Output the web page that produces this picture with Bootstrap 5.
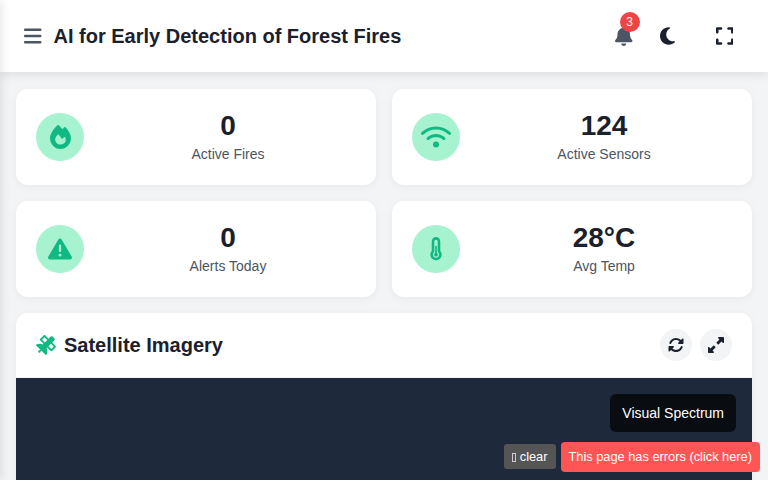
<!DOCTYPE html>
<html lang="en">
<head>
    <meta charset="UTF-8">
    <meta name="viewport" content="width=device-width, initial-scale=1.0">
    <title>AI for Early Detection of Forest Fires</title>
    <link href="https://cdn.jsdelivr.net/npm/bootstrap@5.3.0/dist/css/bootstrap.min.css" rel="stylesheet">
    <style>
        html, body { height: 100%; overflow: hidden; }
        body {
            background-color: #f3f4f6;
            color: #1a202c;
            font-family: "Liberation Sans", Arial, sans-serif;
            line-height: 1.6;
        }
        .side-shadow {
            position: fixed;
            top: 0;
            bottom: 0;
            left: -10px;
            width: 10px;
            box-shadow: 2px 0 10px rgba(0,0,0,0.1);
            z-index: 20;
        }
        .top-bar {
            height: 72px;
            padding: 0 35px 0 24px;
            background: #fff;
            box-shadow: 0 2px 10px rgba(0,0,0,0.1);
        }
        .menu-btn { height: 20px; display: block; color: #4b5563; margin-right: 12px; }
        .page-title { font-size: 20px; font-weight: 700; line-height: 1.2; margin: 0; }
        .top-action { position: relative; display: flex; color: #1a202c; }
        .top-action svg { height: 20px; display: block; }
        .bell-action { color: #4b5563; margin-right: 27px; }
        .moon-action { margin-right: 41px; }
        .count-dot {
            position: absolute;
            top: -14px;
            right: -7px;
            width: 20px;
            height: 20px;
            border-radius: 50%;
            background: #ef4444;
            color: #fff;
            font-size: 12px;
            line-height: 20px;
            text-align: center;
        }
        .page-body { padding: 17px 16px 0; }
        .stat-card {
            border: 0;
            border-radius: 12px;
            padding: 20px;
            box-shadow: 0 2px 8px rgba(0,0,0,0.05);
        }
        .stat-icon {
            width: 48px;
            height: 48px;
            flex-shrink: 0;
            border-radius: 50%;
            background: #a7f3d0;
            color: #10b981;
            margin-right: 16px;
        }
        .stat-icon svg { height: 24px; display: block; }
        .stat-num { font-size: 28px; font-weight: 700; line-height: 1.2; }
        .stat-label { font-size: 14px; color: #4b5563; }
        .imagery-panel {
            border: 0;
            border-radius: 12px;
            margin-top: 16px;
            overflow: hidden;
            box-shadow: 0 2px 8px rgba(0,0,0,0.05);
        }
        .imagery-head { padding: 16px 20px; border-bottom: 1px solid #f3f4f6; }
        .imagery-title { font-size: 20px; font-weight: 700; line-height: 1.6; margin: 0; }
        .imagery-title svg { width: 20px; height: 20px; color: #10b981; margin-right: 8px; }
        .round-btn {
            width: 32px;
            height: 32px;
            padding: 0;
            border: 0;
            border-radius: 50%;
            background: #f3f4f6;
            color: #1a202c;
        }
        .round-btn svg { height: 16px; display: block; }
        .imagery-view { position: relative; height: 300px; background: #1e293b; }
        .spectrum-tag {
            position: absolute;
            top: 16px;
            right: 16px;
            padding: 8px 12px;
            border-radius: 6px;
            background: rgba(0,0,0,0.7);
            color: #fff;
            font-size: 14px;
        }
        .error-bar { position: fixed; right: 8px; bottom: 8px; z-index: 30; }
        .err-clear, .err-open {
            border: 0;
            color: #fff;
            font-size: 12.8px;
            font-family: "Liberation Sans", Arial, sans-serif;
            line-height: 1.2;
        }
        .err-clear { padding: 5px 8px; background: #555; border-radius: 3px; margin: 2px 5px 0 0; height: 25px; }
        .err-open { padding: 7px 8px; background: #ff5555; border-radius: 4px; height: 30px; }
        .missing-glyph {
            display: inline-block;
            width: 4px;
            height: 9px;
            margin-right: 4px;
            border: 1px solid #ccc;
            vertical-align: -1px;
        }
    </style>
</head>
<body>
    <div class="side-shadow"></div>

    <!-- Top bar -->
    <header class="top-bar d-flex align-items-center">
        <svg class="menu-btn" viewBox="0 0 448 512" fill="currentColor"><path d="M0 96C0 78.3 14.3 64 32 64H416c17.7 0 32 14.3 32 32s-14.3 32-32 32H32C14.3 128 0 113.7 0 96zM0 256c0-17.7 14.3-32 32-32H416c17.7 0 32 14.3 32 32s-14.3 32-32 32H32c-17.7 0-32-14.3-32-32zM448 416c0 17.7-14.3 32-32 32H32c-17.7 0-32-14.3-32-32s14.3-32 32-32H416c17.7 0 32 14.3 32 32z"/></svg>
        <h1 class="page-title">AI for Early Detection of Forest Fires</h1>
        <div class="ms-auto d-flex align-items-center">
            <div class="top-action bell-action">
                <svg viewBox="0 0 448 512" fill="currentColor"><path d="M224 0c-17.7 0-32 14.3-32 32V51.2C119 66 64 130.6 64 208v18.8c0 47-17.3 92.4-48.5 127.6l-7.4 8.3c-8.4 9.4-10.4 22.9-5.3 34.4S19.4 416 32 416H416c12.6 0 24-7.4 29.2-18.9s3.1-25-5.3-34.4l-7.4-8.3C401.3 319.2 384 273.9 384 226.8V208c0-77.4-55-142-128-156.8V32c0-17.7-14.3-32-32-32zm45.3 493.3c12-12 18.7-28.3 18.7-45.3H224 160c0 17 6.7 33.3 18.7 45.3s28.3 18.7 45.3 18.7s33.3-6.7 45.3-18.7z"/></svg>
                <span class="count-dot">3</span>
            </div>
            <div class="top-action moon-action">
                <svg viewBox="0 0 384 512" fill="currentColor"><path d="M223.5 32C100 32 0 132.3 0 256S100 480 223.5 480c60.6 0 115.5-24.2 155.8-63.4c5-4.9 6.3-12.5 3.1-18.7s-10.1-9.7-17-8.5c-9.8 1.7-19.8 2.6-30.1 2.6c-96.9 0-175.5-78.8-175.5-176c0-65.8 36-123.1 89.3-153.3c6.1-3.5 9.2-10.5 7.7-17.3s-7.3-11.9-14.3-12.5c-6.3-.5-12.6-.8-19-.8z"/></svg>
            </div>
            <div class="top-action">
                <svg viewBox="0 0 448 512" fill="currentColor"><path d="M32 32C14.3 32 0 46.3 0 64v96c0 17.7 14.3 32 32 32s32-14.3 32-32V96h64c17.7 0 32-14.3 32-32s-14.3-32-32-32H32zM64 352c0-17.7-14.3-32-32-32s-32 14.3-32 32v96c0 17.7 14.3 32 32 32h96c17.7 0 32-14.3 32-32s-14.3-32-32-32H64V352zM320 32c-17.7 0-32 14.3-32 32s14.3 32 32 32h64v64c0 17.7 14.3 32 32 32s32-14.3 32-32V64c0-17.7-14.3-32-32-32H320zM448 352c0-17.7-14.3-32-32-32s-32 14.3-32 32v64H320c-17.7 0-32 14.3-32 32s14.3 32 32 32h96c17.7 0 32-14.3 32-32V352z"/></svg>
            </div>
        </div>
    </header>

    <main class="page-body">
        <!-- Stats -->
        <div class="row g-3">
            <div class="col-6">
                <div class="card stat-card flex-row align-items-center">
                    <div class="stat-icon d-flex align-items-center justify-content-center">
                        <svg viewBox="0 0 448 512" fill="currentColor"><path d="M159.3 5.4c7.8-7.3 19.9-7.2 27.7 .1c27.6 25.9 53.5 53.8 77.7 84c11-14.4 23.5-30.1 37-42.9c7.9-7.4 20.1-7.4 28 .1c34.6 33 63.9 76.6 84.5 118c20.3 40.8 33.8 82.5 33.8 111.9C448 404.2 348.2 512 224 512C98.4 512 0 404.1 0 276.5c0-38.4 17.8-85.3 45.4-131.7C73.3 97.7 112.7 48.6 159.3 5.4zM225.7 416c25.3 0 47.7-7 68.8-21c42.1-29.4 53.4-88.2 28.1-134.4c-4.5-9-16-9.6-22.5-2l-25.2 29.3c-6.6 7.6-18.5 7.4-24.7-.5c-16.5-21-46-58.5-62.8-79.8c-6.3-8-18.3-8.1-24.7-.1c-33.8 42.5-50.8 69.3-50.8 99.4C112 375.4 162.6 416 225.7 416z"/></svg>
                    </div>
                    <div class="flex-grow-1 text-center">
                        <div class="stat-num">0</div>
                        <div class="stat-label">Active Fires</div>
                    </div>
                </div>
            </div>
            <div class="col-6">
                <div class="card stat-card flex-row align-items-center">
                    <div class="stat-icon d-flex align-items-center justify-content-center">
                        <svg viewBox="0 0 640 512" fill="currentColor"><path d="M54.2 202.9C123.2 136.7 216.8 96 320 96s196.8 40.7 265.8 106.9c12.8 12.2 33 11.8 45.2-.9s11.8-33-.9-45.2C549.7 79.5 440.4 32 320 32S90.3 79.5 9.8 156.7C-2.9 169-3.3 189.2 8.9 202s32.5 13.2 45.2 .9zM320 256c56.8 0 108.6 21.1 148.2 56c13.3 11.7 33.5 10.4 45.2-2.8s10.4-33.5-2.8-45.2C459.8 219.2 393 192 320 192s-139.8 27.2-190.5 72c-13.3 11.7-14.5 31.9-2.8 45.2s31.9 14.5 45.2 2.8c39.5-34.9 91.3-56 148.2-56zm64 160a64 64 0 1 0 -128 0 64 64 0 1 0 128 0z"/></svg>
                    </div>
                    <div class="flex-grow-1 text-center">
                        <div class="stat-num">124</div>
                        <div class="stat-label">Active Sensors</div>
                    </div>
                </div>
            </div>
            <div class="col-6">
                <div class="card stat-card flex-row align-items-center">
                    <div class="stat-icon d-flex align-items-center justify-content-center">
                        <svg viewBox="0 0 512 512" fill="currentColor"><path d="M256 32c14.2 0 27.3 7.5 34.5 19.8l216 368c7.3 12.4 7.3 27.7 .2 40.1S486.3 480 472 480H40c-14.3 0-27.6-7.7-34.7-20.1s-7-27.8 .2-40.1l216-368C228.7 39.5 241.8 32 256 32zm0 128c-13.3 0-24 10.7-24 24V296c0 13.3 10.7 24 24 24s24-10.7 24-24V184c0-13.3-10.7-24-24-24zm32 224a32 32 0 1 0 -64 0 32 32 0 1 0 64 0z"/></svg>
                    </div>
                    <div class="flex-grow-1 text-center">
                        <div class="stat-num">0</div>
                        <div class="stat-label">Alerts Today</div>
                    </div>
                </div>
            </div>
            <div class="col-6">
                <div class="card stat-card flex-row align-items-center">
                    <div class="stat-icon d-flex align-items-center justify-content-center">
                        <svg viewBox="0 0 12 24" fill="currentColor"><path d="M3 4.4a3 3 0 0 1 6 0v10a4.4 4.4 0 1 1-6 0z" fill="none" stroke="currentColor" stroke-width="2.6"/><circle cx="6" cy="17.6" r="1.9"/><rect x="5.2" y="9" width="1.6" height="8"/></svg>
                    </div>
                    <div class="flex-grow-1 text-center">
                        <div class="stat-num">28°C</div>
                        <div class="stat-label">Avg Temp</div>
                    </div>
                </div>
            </div>
        </div>

        <!-- Satellite panel -->
        <div class="card imagery-panel">
            <div class="imagery-head d-flex align-items-center justify-content-between">
                <h2 class="imagery-title d-flex align-items-center">
                    <svg viewBox="0 0 512 512" fill="currentColor"><path d="M233 7c-9.4-9.4-24.6-9.4-33.9 0l-96 96c-9.4 9.4-9.4 24.6 0 33.9l89.4 89.4-15.5 15.5C152.3 230.4 124.9 224 96 224c-31.7 0-61.5 7.7-87.8 21.2c-9 4.7-10.3 16.7-3.1 23.8L112.7 376.7 96.3 393.1c-2.6-.7-5.4-1.1-8.3-1.1c-17.7 0-32 14.3-32 32s14.3 32 32 32s32-14.3 32-32c0-2.9-.4-5.6-1.1-8.3l16.4-16.4L242.9 506.9c7.2 7.2 19.2 5.9 23.8-3.1C280.3 477.5 288 447.7 288 416c0-28.9-6.4-56.3-17.8-80.9l15.5-15.5L375 409c9.4 9.4 24.6 9.4 33.9 0l96-96c9.4-9.4 9.4-24.6 0-33.9l-89.4-89.4 55-55c12.5-12.5 12.5-32.8 0-45.3l-48-48c-12.5-12.5-32.8-12.5-45.3 0l-55 55L233 7zM216 57.9l72.4 72.4-62.1 62.1L153.9 120 216 57.9zM392 358.1l-72.4-72.4 62.1-62.1L454.1 296 392 358.1z"/></svg>
                    Satellite Imagery
                </h2>
                <div class="d-flex gap-2">
                    <button class="round-btn d-flex align-items-center justify-content-center" type="button">
                        <svg viewBox="0 0 512 512" fill="currentColor"><path d="M142.9 142.9c62.2-62.2 162.7-62.5 225.3-1L327 183c-6.9 6.9-8.9 17.2-5.2 26.2s12.5 14.8 22.2 14.8H463.5c0 0 0 0 0 0H472c13.3 0 24-10.7 24-24V72c0-9.7-5.8-18.5-14.8-22.2s-19.3-1.7-26.2 5.2L413.4 96.6c-87.6-86.5-228.7-86.2-315.8 1C73.2 122 55.6 150.7 44.8 181.4c-5.9 16.7 2.9 34.9 19.5 40.8s34.9-2.9 40.8-19.5c7.7-21.8 20.2-42.3 37.8-59.8zM16 312v7.6 .7V440c0 9.7 5.8 18.5 14.8 22.2s19.3 1.7 26.2-5.2l41.6-41.6c87.6 86.5 228.7 86.2 315.8-1c24.4-24.4 42.1-53.1 52.9-83.7c5.9-16.7-2.9-34.9-19.5-40.8s-34.9 2.9-40.8 19.5c-7.7 21.8-20.2 42.3-37.8 59.8c-62.2 62.2-162.7 62.5-225.3 1L185 329c6.9-6.9 8.9-17.2 5.2-26.2s-12.5-14.8-22.2-14.8H48.4h-.7H40c-13.3 0-24 10.7-24 24z"/></svg>
                    </button>
                    <button class="round-btn d-flex align-items-center justify-content-center" type="button">
                        <svg viewBox="0 0 512 512" fill="currentColor"><path d="M344 0H488c13.3 0 24 10.7 24 24V168c0 9.7-5.8 18.5-14.8 22.2s-19.3 1.7-26.2-5.2l-39-39-87 87c-9.4 9.4-24.6 9.4-33.9 0l-32-32c-9.4-9.4-9.4-24.6 0-33.9l87-87L327 41c-6.9-6.9-8.9-17.2-5.2-26.2S334.3 0 344 0zM168 512H24c-13.3 0-24-10.7-24-24V344c0-9.7 5.8-18.5 14.8-22.2s19.3-1.7 26.2 5.2l39 39 87-87c9.4-9.4 24.6-9.4 33.9 0l32 32c9.4 9.4 9.4 24.6 0 33.9l-87 87 39 39c6.9 6.9 8.9 17.2 5.2 26.2s-12.5 14.8-22.2 14.8z"/></svg>
                    </button>
                </div>
            </div>
            <div class="imagery-view">
                <span class="spectrum-tag">Visual Spectrum</span>
            </div>
        </div>
    </main>

    <!-- Error notice -->
    <div class="error-bar d-flex align-items-start">
        <button class="err-clear" type="button"><span class="missing-glyph"></span>clear</button>
        <button class="err-open" type="button">This page has errors (click here)</button>
    </div>

    <script src="https://cdn.jsdelivr.net/npm/bootstrap@5.3.0/dist/js/bootstrap.bundle.min.js"></script>
</body>
</html>
